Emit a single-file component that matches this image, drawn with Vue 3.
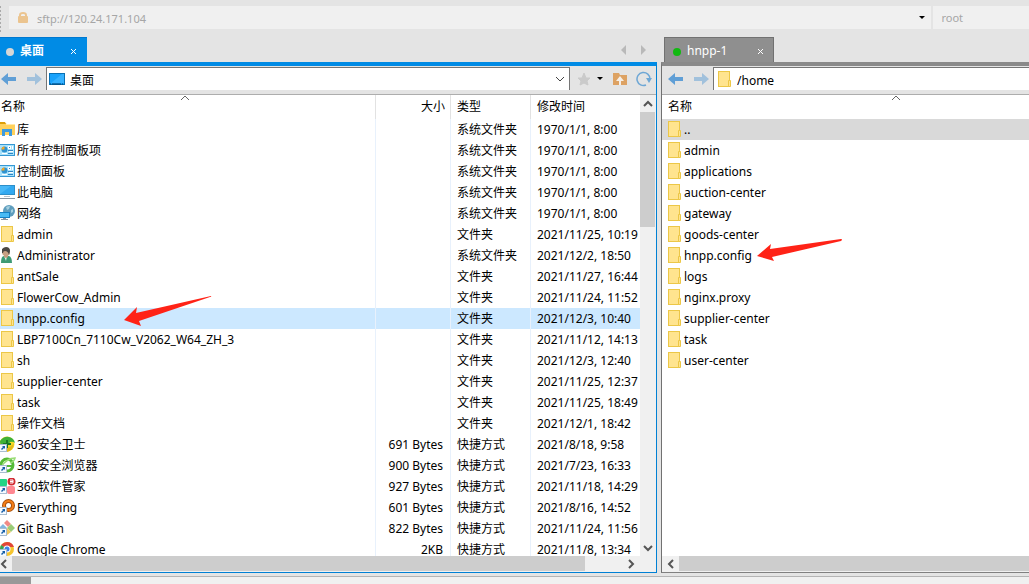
<script setup>
import { ref } from 'vue'

const host = ref('sftp://120.24.171.104')
const user = ref('root')

const sys = '系统文件夹'
const dir = '文件夹'
const link = '快捷方式'

const localFiles = [
  { name: '库', icon: 'library', size: '', type: sys, date: '1970/1/1, 8:00' },
  { name: '所有控制面板项', icon: 'control', size: '', type: sys, date: '1970/1/1, 8:00' },
  { name: '控制面板', icon: 'control', size: '', type: sys, date: '1970/1/1, 8:00' },
  { name: '此电脑', icon: 'computer', size: '', type: sys, date: '1970/1/1, 8:00' },
  { name: '网络', icon: 'network', size: '', type: sys, date: '1970/1/1, 8:00' },
  { name: 'admin', icon: 'folder', size: '', type: dir, date: '2021/11/25, 10:19' },
  { name: 'Administrator', icon: 'user', size: '', type: sys, date: '2021/12/2, 18:50' },
  { name: 'antSale', icon: 'folder', size: '', type: dir, date: '2021/11/27, 16:44' },
  { name: 'FlowerCow_Admin', icon: 'folder', size: '', type: dir, date: '2021/11/24, 11:52' },
  { name: 'hnpp.config', icon: 'folder', size: '', type: dir, date: '2021/12/3, 10:40', selected: true },
  { name: 'LBP7100Cn_7110Cw_V2062_W64_ZH_3', icon: 'folder', size: '', type: dir, date: '2021/11/12, 14:13' },
  { name: 'sh', icon: 'folder', size: '', type: dir, date: '2021/12/3, 12:40' },
  { name: 'supplier-center', icon: 'folder', size: '', type: dir, date: '2021/11/25, 12:37' },
  { name: 'task', icon: 'folder', size: '', type: dir, date: '2021/11/25, 18:49' },
  { name: '操作文档', icon: 'folder', size: '', type: dir, date: '2021/12/1, 18:42' },
  { name: '360安全卫士', icon: 'guard', shortcut: true, size: '691 Bytes', type: link, date: '2021/8/18, 9:58' },
  { name: '360安全浏览器', icon: 'browser', shortcut: true, size: '900 Bytes', type: link, date: '2021/7/23, 16:33' },
  { name: '360软件管家', icon: 'manager', shortcut: true, size: '927 Bytes', type: link, date: '2021/11/18, 14:29' },
  { name: 'Everything', icon: 'everything', shortcut: true, size: '601 Bytes', type: link, date: '2021/8/16, 14:52' },
  { name: 'Git Bash', icon: 'git', shortcut: true, size: '822 Bytes', type: link, date: '2021/11/24, 11:56' },
  { name: 'Google Chrome', icon: 'chrome', shortcut: true, size: '2KB', type: link, date: '2021/11/8, 13:34' },
]

const remoteFiles = [
  '..', 'admin', 'applications', 'auction-center', 'gateway', 'goods-center',
  'hnpp.config', 'logs', 'nginx.proxy', 'supplier-center', 'task', 'user-center',
]
</script>

<template>
  <div class="app">
    <svg class="defs" aria-hidden="true">
      <symbol id="folder" viewBox="0 0 16 16">
        <rect x="1.5" y="0.5" width="11" height="15" fill="#ffe48f" stroke="#ecc747" />
        <path d="M11.5 15.5V9.5h2v6z" fill="#ffe48f" stroke="#ecc747" />
      </symbol>
      <symbol id="library" viewBox="0 0 16 16">
        <path d="M0 2h5l2 1h8v11H0z" fill="#ffd15c" />
        <path d="M0 1h5l1 2H0z" fill="#dd9f08" />
        <path d="M6 3h9v1H6z" fill="#ffe9a8" />
        <path d="M2 8h10v7H9v-4H5v4H2z" fill="#3d9be0" />
      </symbol>
      <symbol id="control" viewBox="0 0 16 16">
        <rect x="-1" y="2" width="16" height="12" fill="#3598d4" />
        <rect x="-1" y="3" width="15" height="10" fill="#a9e2fb" />
        <circle cx="4.500" cy="7.500" r="3" fill="#2f93d0" />
        <path d="M4.500 7.500V4.500a3 3 0 0 0-3 3z" fill="#f5a623" />
        <path d="M8 4h3v3H8zM12 4h1v3h-1zM9 9h4v1H9zM2 12h5v-1H2z" fill="#fff" />
        <path d="M9 5h1v1H9zM8 8h5v1H8zM8 11h5v1H8z" fill="#2f86c4" />
      </symbol>
      <symbol id="computer" viewBox="0 0 16 16">
        <rect x="-1" y="1" width="16" height="10" fill="#2d8fc9" />
        <rect x="0" y="2" width="14" height="8" fill="#48b8f7" />
        <path d="M0 10L11 2h3v8z" fill="#32a9f1" />
        <path d="M4 12h6v1H4z" fill="#b7c3cd" />
        <path d="M0 14h15v1H0z" fill="#8795a3" />
      </symbol>
      <symbol id="network" viewBox="0 0 16 16">
        <circle cx="9" cy="6" r="6" fill="#5f9dbd" />
        <path d="M6 2q2-1 4-1l-1 3-2 1zM11 5l2-1v3l-2 1z" fill="#a5cfdf" />
        <path d="M0 7h10v6H0z" fill="#1581c6" />
        <path d="M0 8h9v4H0z" fill="#49bbf5" />
        <path d="M3 13h3v1h2v1H1v-1h2z" fill="#8795a3" />
      </symbol>
      <symbol id="user" viewBox="0 0 16 16">
        <path d="M1 16q0-7 3-7h5q3 1 3 7z" fill="#3e9a75" />
        <path d="M4 9h3l-1 5z" fill="#e9f3ee" />
        <path d="M4 7h4v3l-2 1-2-1z" fill="#c29a7b" />
        <circle cx="6" cy="5" r="4" fill="#c9a184" />
        <path d="M2 6V2q2-2 4-2 4 0 4 4l-1 4q-1-4-4-4-2 0-2 2z" fill="#4b4743" />
      </symbol>
      <symbol id="guard" viewBox="0 0 16 16">
        <circle cx="7" cy="8" r="7.500" fill="#f4d925" />
        <path d="M0 5q4-5 9-4 5 1 6 6-2-2-5-1-2 5-7 5Q0 10 0 5z" fill="#3fb138" />
        <path d="M3 12q7 1 11-5-1 8-7 9-3 0-4-4z" fill="#e5b91a" />
        <path d="M6 4h2v3h3v2H8v3H6V9H3V7h3z" fill="#187925" />
      </symbol>
      <symbol id="browser" viewBox="0 0 16 16">
        <circle cx="7" cy="8" r="6" fill="#fff" stroke="#55bb37" stroke-width="3" />
        <path d="M2 8h11v2H6" fill="#55bb37" />
        <path d="M1 10Q7 1 15 1q-1 4-5 5" fill="none" stroke="#9add76" stroke-width="1.500" />
      </symbol>
      <symbol id="manager" viewBox="0 0 16 16">
        <rect x="-1" y="1" width="8" height="7" rx="1" fill="#22d486" />
        <rect x="7" y="8" width="8" height="8" rx="2" fill="#ff8791" />
        <circle cx="11.500" cy="3.500" r="4" fill="#d22d35" />
        <path d="M10 2h3v3h-3M10 3.500h3" fill="none" stroke="#fff" />
      </symbol>
      <symbol id="everything" viewBox="0 0 16 16">
        <path d="M5 10l-5 5" stroke="#a6500f" stroke-width="4" />
        <circle cx="8.500" cy="6.500" r="4.500" fill="#fff" stroke="#a6500f" stroke-width="4" />
        <circle cx="8.500" cy="6.500" r="4.500" fill="none" stroke="#f57f17" stroke-width="2" />
      </symbol>
      <symbol id="git" viewBox="0 0 16 16">
        <path d="M7 0l4 4-3 3-4-4z" fill="#f08a85" />
        <path d="M11 4l4 4-4 4-4-4z" fill="#9acb77" />
        <path d="M3 4l4 4-4 4-4-4z" fill="#82b6de" />
        <path d="M7 8l4 4-4 3-3-3z" fill="#efc65d" />
      </symbol>
      <symbol id="chrome" viewBox="0 0 16 16">
        <circle cx="7" cy="8" r="7" fill="#f6c52d" />
        <path d="M7 8L1 4Q4 1 7 1q5 0 7 5H7z" fill="#e24538" />
        <path d="M7 8L5 15Q0 13 0 8q0-2 1-4z" fill="#35a257" />
        <circle cx="7" cy="8" r="3.500" fill="#fff" />
        <circle cx="7" cy="8" r="2.500" fill="#3f82e8" />
      </symbol>
      <symbol id="shortcut" viewBox="0 0 16 16">
        <rect x="-0.500" y="8.500" width="7" height="7" fill="#f5faff" stroke="#a9bdd0" />
        <path d="M2 10h3v3l-1-1-2 2-1-1 2-2z" fill="#155ea8" />
      </symbol>
      <symbol id="back" viewBox="0 0 16 14">
        <path d="M0 7l7-6v4h8v4H7v4z" />
      </symbol>
      <symbol id="forward" viewBox="0 0 16 14">
        <path d="M15 7L8 1v4H0v4h8v4z" />
      </symbol>
      <symbol id="peak" viewBox="0 0 10 6">
        <path d="M1 5l4-4 4 4" fill="none" stroke="#666" />
      </symbol>
      <symbol id="close" viewBox="0 0 7 7">
        <path d="M1 1l5 5M6 1L1 6" fill="none" stroke="#fff" />
      </symbol>
      <symbol id="pointer-local" viewBox="0 0 88 31">
        <path d="M0 25L13 12l-1 6 75-17q1 1-1 1L15 26l2 5z" fill="#ff2317" />
      </symbol>
      <symbol id="pointer-remote" viewBox="0 0 86 23">
        <path d="M0 17L14 5l-1 5 71-10q2 0 0 2L15 18l2 4z" fill="#ff2317" />
      </symbol>
      <symbol id="scroll-chevron" viewBox="0 0 10 10">
        <path d="M1 7l4-4 4 4" fill="none" stroke="#555" stroke-width="2" />
      </symbol>
    </svg>

    <header class="toolbar">
      <span class="grip"></span>
      <div class="host">
        <svg class="lock" viewBox="0 0 12 11" aria-hidden="true">
          <path d="M3 5V3q0-2 3-2t3 2v2" fill="none" stroke="#ebc48f" stroke-width="2" />
          <rect x="1" y="4" width="10" height="7" rx="1" fill="#ebc48f" />
        </svg>
        <input v-model="host" class="field" aria-label="主机地址" />
        <button class="drop" aria-label="历史"><span class="caret"></span></button>
      </div>
      <input v-model="user" class="field user" aria-label="用户名" />
    </header>

    <main class="panes">
      <section class="pane local">
        <div class="tabs">
          <div class="tab">
            <span class="dot"></span>
            <span class="tab-title">桌面</span>
            <button class="tab-close" aria-label="关闭"><svg class="x"><use href="#close" /></svg></button>
          </div>
          <div class="tab-nav">
            <button aria-label="上一个"><span class="tri left"></span></button>
            <button aria-label="下一个"><span class="tri right"></span></button>
          </div>
        </div>
        <div class="body">
          <div class="path-row">
            <button class="nav" aria-label="后退"><svg class="arrow"><use href="#back" /></svg></button>
            <button class="nav dim" aria-label="前进"><svg class="arrow"><use href="#forward" /></svg></button>
            <div class="path">
              <svg class="path-icon" viewBox="0 0 16 16" aria-hidden="true">
                <rect x="0.500" y="2.500" width="15" height="11" fill="#18a2fb" stroke="#0870b4" />
                <path d="M2 12L13 3h2v9z" fill="#36b1ff" />
                <path d="M1 13h14" stroke="#073f67" stroke-dasharray="1 1 9 1" />
              </svg>
              <select aria-label="本地目录"><option>桌面</option></select>
              <svg class="path-chevron" viewBox="0 0 10 6" aria-hidden="true"><path d="M1 1l4 4 4-4" fill="none" stroke="#444" /></svg>
            </div>
            <div class="tools">
              <button aria-label="收藏"><svg class="tool" viewBox="0 0 16 16"><path d="M8 2l2 5 4 0-3 3 1 4-4-2-4 2 1-4-3-3h4z" fill="#cacaca" stroke="#cacaca" /></svg></button>
              <button class="fav-drop" aria-label="收藏列表"><span class="caret"></span></button>
              <button aria-label="上级目录">
                <svg class="tool" viewBox="0 0 16 16">
                  <path d="M1 2h6l1 2h7v10H1z" fill="#dda263" />
                  <path d="M8 5l4 5H9v4H7v-4H4z" fill="#f6eee5" />
                </svg>
              </button>
              <button aria-label="刷新">
                <svg class="tool" viewBox="0 0 16 16">
                  <path d="M10 14a6.500 6.500 0 1 1 4-6" fill="none" stroke="#6ea7d5" stroke-width="1.500" />
                  <path d="M10 7h6l-3 5z" fill="#6ea7d5" />
                </svg>
              </button>
            </div>
          </div>
          <div class="list">
            <div class="table-wrap">
              <svg class="peak"><use href="#peak" /></svg>
              <table>
                <colgroup><col /><col class="c-size" /><col class="c-type" /><col class="c-date" /></colgroup>
                <thead>
                  <tr><th>名称</th><th class="size">大小</th><th>类型</th><th>修改时间</th></tr>
                </thead>
                <tbody>
                  <tr v-for="f in localFiles" :key="f.name" :class="{ selected: f.selected }">
                    <td class="name">
                      <svg class="icon" aria-hidden="true">
                        <use :href="'#' + f.icon" />
                        <use v-if="f.shortcut" href="#shortcut" />
                      </svg>{{ f.name }}
                      <svg v-if="f.selected" class="pointer" aria-hidden="true"><use href="#pointer-local" /></svg>
                    </td>
                    <td class="size">{{ f.size }}</td>
                    <td>{{ f.type }}</td>
                    <td>{{ f.date }}</td>
                  </tr>
                </tbody>
              </table>
            </div>
            <div class="vbar">
              <button aria-label="向上滚动"><svg class="sc"><use href="#scroll-chevron" /></svg></button>
              <div class="vtrack"><div class="vthumb"></div></div>
              <button aria-label="向下滚动"><svg class="sc down"><use href="#scroll-chevron" /></svg></button>
            </div>
          </div>
          <div class="hbar">
            <button class="edge" aria-label="向左滚动"><svg class="sc to-left"><use href="#scroll-chevron" /></svg></button>
            <div class="htrack"><div class="hthumb"></div></div>
            <button class="end" aria-label="向右滚动"><svg class="sc to-right"><use href="#scroll-chevron" /></svg></button>
          </div>
        </div>
      </section>

      <section class="pane remote">
        <div class="tabs">
          <div class="tab">
            <span class="dot"></span>
            <span class="tab-title">hnpp-1</span>
            <button class="tab-close" aria-label="关闭"><svg class="x"><use href="#close" /></svg></button>
          </div>
        </div>
        <div class="body">
          <div class="path-row">
            <button class="nav" aria-label="后退"><svg class="arrow"><use href="#back" /></svg></button>
            <button class="nav dim" aria-label="前进"><svg class="arrow"><use href="#forward" /></svg></button>
            <div class="path">
              <svg class="path-icon"><use href="#folder" /></svg>
              <select aria-label="远程目录"><option>/home</option></select>
            </div>
          </div>
          <div class="list">
            <div class="table-wrap">
              <svg class="peak"><use href="#peak" /></svg>
              <table>
                <thead><tr><th>名称</th></tr></thead>
                <tbody>
                  <tr v-for="(name, i) in remoteFiles" :key="name" :class="{ current: i === 0 }">
                    <td class="name">
                      <svg class="icon" aria-hidden="true"><use href="#folder" /></svg>{{ name }}
                      <svg v-if="name === 'hnpp.config'" class="pointer" aria-hidden="true"><use href="#pointer-remote" /></svg>
                    </td>
                  </tr>
                </tbody>
              </table>
            </div>
          </div>
          <div class="hbar">
            <button aria-label="向左滚动"><svg class="sc to-left"><use href="#scroll-chevron" /></svg></button>
            <div class="htrack"><div class="hthumb full"></div></div>
          </div>
        </div>
      </section>
    </main>

    <footer class="bottom"><div class="bottom-thumb"></div></footer>
  </div>
</template>

<style>
html,
body {
  margin: 0;
  background: #e4e4e4;
}
</style>

<style scoped>
.app {
  display: flex;
  flex-direction: column;
  height: 100vh;
  overflow: hidden;
  background: #e4e4e4;
  color: #000;
  font-family: "Noto Sans", "Noto Sans CJK SC", sans-serif;
  font-size: 12px;
  line-height: 20px;
}
.app * {
  box-sizing: border-box;
}
.defs {
  position: absolute;
  width: 0;
  height: 0;
}
button {
  display: flex;
  align-items: center;
  justify-content: center;
  margin: 0;
  padding: 0;
  border: 0;
  background: none;
}
input,
select {
  margin: 0;
  padding: 0;
  border: 0;
  outline: 0;
  border-radius: 0;
  background: none;
  color: inherit;
  font: inherit;
  appearance: none;
}
svg {
  display: block;
  flex: none;
}

.toolbar {
  display: grid;
  grid-template-columns: 1px 923fr 95fr;
  column-gap: 2px;
  flex: none;
  height: 37px;
  padding: 6px 0 8px;
}
.grip {
  align-self: start;
  height: 26px;
  background: repeating-linear-gradient(#aaa 0 2px, transparent 2px 4px);
}
.host {
  display: flex;
  align-items: center;
  height: 23px;
  margin-left: 6px;
  padding: 0 5px 0 8px;
  background: #f0f0f0;
}
.lock {
  width: 12px;
  height: 11px;
}
.field {
  height: 23px;
  color: #a6a6a6;
  font-size: 11px;
}
.host .field {
  flex: 1;
  min-width: 0;
  padding: 2px 0 0 8px;
}
.user {
  width: 100%;
  padding-left: 8px;
  background: #f0f0f0;
}
.drop {
  width: 8px;
  height: 20px;
}
.caret {
  border: 3px solid transparent;
  border-top-color: #000;
  border-bottom: 0;
}

.panes {
  display: grid;
  grid-template-columns: 657fr 368fr;
  column-gap: 4px;
  flex: 1;
  min-height: 0;
}
.pane {
  display: flex;
  flex-direction: column;
  min-width: 0;
  min-height: 0;
}
.tabs {
  display: flex;
  justify-content: space-between;
  flex: none;
  height: 25px;
}
.tab {
  display: flex;
  align-items: center;
  padding: 1px 9px 0 6px;
  border-top: 1px solid #0078d0;
  background: #008be5;
  color: #fff;
  width: 87px;
}
.tab-title {
  flex: 1;
  font-weight: bold;
}
.dot {
  width: 8px;
  height: 8px;
  margin: 3px 6px 0 0;
  border-radius: 50%;
  background: #d6d6d6;
}
.tab-close {
  width: 9px;
  height: 12px;
  margin-top: 2px;
}
.x {
  width: 7px;
  height: 7px;
}
.remote .tab {
  width: 110px;
  margin-left: 3px;
  padding-left: 8px;
  padding-right: 8px;
  border: 1px solid #717171;
  border-bottom: 0;
  background: #8f8f8f;
}
.remote .tab-title {
  font-weight: normal;
}
.remote .dot {
  background: #10b910;
}
.tab-nav {
  display: flex;
  gap: 15px;
  padding-right: 11px;
}
.tri {
  border: 5px solid transparent;
}
.tri.left {
  border-left: 0;
  border-right-color: #b9b9b9;
}
.tri.right {
  border-right: 0;
  border-left-color: #b9b9b9;
}

.body {
  display: flex;
  flex-direction: column;
  flex: 1;
  min-height: 0;
  border-top: 4px solid #008be5;
  border-right: 1px solid #0080d4;
  border-bottom: 1px solid #0080d4;
}
.remote .body {
  border-top-color: #8a8a8a;
  border-right: 0;
  border-bottom-color: #808080;
  border-left: 1px solid #717171;
}
.path-row {
  display: flex;
  align-items: center;
  flex: none;
  height: 29px;
  padding: 1px 4px 4px 1px;
  border-bottom: 1px solid #adadad;
}
.remote .path-row {
  padding-right: 0;
  padding-left: 6px;
}
.nav {
  width: 16px;
  height: 20px;
  margin-right: 10px;
}
.nav.dim {
  margin-right: 3px;
  opacity: 0.5;
}
.arrow {
  width: 16px;
  height: 14px;
  fill: #609fd6;
}
.path {
  display: flex;
  align-items: center;
  flex: 1;
  min-width: 0;
  height: 23px;
  padding: 0 4px 0 2px;
  border: 1px solid #767676;
  border-bottom: 0;
  background: #fff;
}
.remote .path {
  padding-left: 3px;
  border-right: 0;
}
.path-icon {
  width: 16px;
  height: 16px;
}
.path select {
  flex: 1;
  min-width: 0;
  height: 21px;
  padding: 2px 0 0 5px;
}
.remote .path select {
  padding-left: 4px;
}
.path-chevron {
  width: 10px;
  height: 6px;
}
.tools {
  display: flex;
  align-items: center;
  padding-left: 6px;
}
.tool {
  width: 16px;
  height: 16px;
}
.fav-drop {
  width: 16px;
  height: 16px;
  margin-right: 4px;
}
.tools button:last-child {
  margin-left: 8px;
}

.list {
  display: flex;
  flex: 1;
  min-height: 0;
  background: #fff;
}
.table-wrap {
  position: relative;
  flex: 1;
  min-width: 0;
  overflow: hidden;
}
.peak {
  position: absolute;
  top: 0;
  left: 180px;
  width: 10px;
  height: 6px;
}
.remote .peak {
  left: calc(50% + 45px);
}
table {
  width: 100%;
  border-collapse: separate;
  border-spacing: 0;
  table-layout: fixed;
}
.c-size {
  width: 75px;
}
.c-type {
  width: 80px;
}
.c-date {
  width: 110px;
}
th,
td {
  height: 21px;
  padding: 0 0 0 6px;
  border-left: 1px solid #e8f1fc;
  font-weight: normal;
  text-align: left;
  white-space: nowrap;
  line-height: 20px;
}
th {
  height: 24px;
  border-left-color: #e2e2e2;
}
th:first-child,
td:first-child {
  border-left: 0;
}
th:first-child {
  padding-left: 1px;
}
td.name {
  position: relative;
  padding-left: 17px;
}
th.size,
td.size {
  padding-right: 7px;
  text-align: right;
}
th.size {
  padding-right: 5px;
}
.remote th:first-child {
  padding-left: 6px;
}
.remote td.name {
  padding-left: 22px;
}
.icon {
  position: absolute;
  top: 2px;
  left: 0;
  width: 16px;
  height: 16px;
}
.remote .icon {
  left: 5px;
}
.selected td {
  background: #cce8ff;
}
.current td {
  background: #d9d9d9;
}
.pointer {
  position: absolute;
  top: -13px;
  left: 124px;
  width: 88px;
  height: 31px;
}
.remote .pointer {
  top: -6px;
  left: 95px;
  width: 86px;
  height: 23px;
}

.vbar {
  display: flex;
  flex-direction: column;
  flex: none;
  width: 16px;
  background: #f0f0f0;
}
.vbar button {
  flex: none;
  height: 17px;
}
.vtrack {
  flex: 1;
}
.vthumb {
  width: 15px;
  height: 27%;
  background: #cdcdcd;
}
.sc {
  width: 10px;
  height: 10px;
}
.down {
  transform: rotate(180deg);
}
.to-left {
  transform: rotate(-90deg);
}
.to-right {
  transform: rotate(90deg);
}
.hbar {
  display: flex;
  flex: none;
  height: 16px;
  background: #f0f0f0;
}
.hbar button {
  width: 17px;
}
.hbar .edge {
  width: 12px;
  padding-right: 5px;
}
.hbar .end {
  width: 18px;
  margin-right: 16px;
}
.htrack {
  flex: 1;
}
.hthumb {
  width: 94%;
  height: 15px;
  background: #cdcdcd;
}
.hthumb.full {
  width: 100%;
}
.bottom {
  flex: none;
  height: 11px;
  border-top: 3px solid #e4e4e4;
  background: #f0f0f0;
  box-shadow: inset 0 1px #b4b4b4;
  padding-top: 1px;
}
.bottom-thumb {
  width: 3%;
  height: 7px;
  background: #999;
}
</style>
